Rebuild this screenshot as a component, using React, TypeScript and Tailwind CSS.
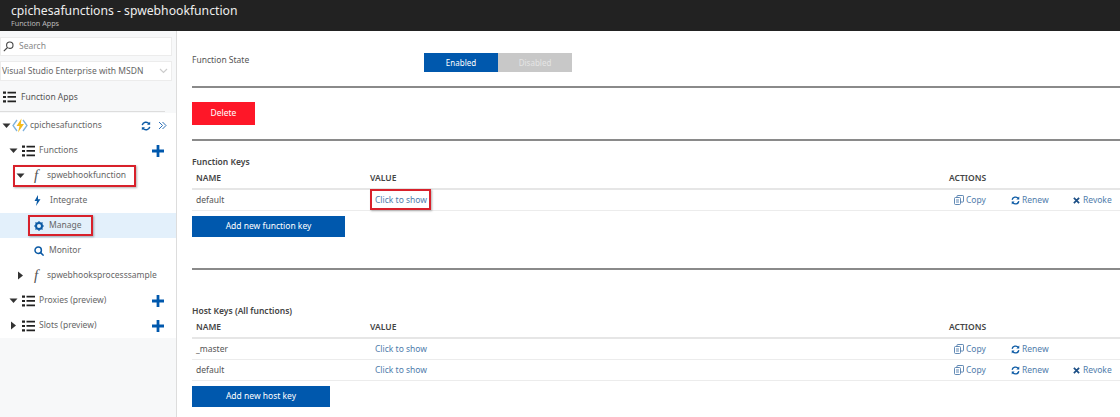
import React from "react";

const Caret = ({ open }: { open: boolean }) => (
  <svg width="9" height="9" viewBox="0 0 9 9" className="shrink-0">
    {open ? <path d="M0.5 2.5H8.5L4.5 7Z" fill="#333" /> : <path d="M2 0.5V8.5L7 4.5Z" fill="#333" />}
  </svg>
);
const ListIcon = () => (
  <svg width="13" height="12" viewBox="0 0 13 12" className="shrink-0">
    <path d="M0 0.5h3v2.2H0zM4.5 0.7H13v1.7H4.5zM0 4.9h3v2.2H0zM4.5 5.1H13v1.7H4.5zM0 9.3h3v2.2H0zM4.5 9.5H13v1.7H4.5z" fill="#222" />
  </svg>
);
const Plus = () => (
  <svg width="12" height="12" viewBox="0 0 13 13" className="shrink-0">
    <path d="M5 0h3v5h5v3H8v5H5V8H0V5h5z" fill="#0058ad" />
  </svg>
);
const Fn = () => <span className="w-[12px] text-center text-[15px] italic text-[#555] leading-none font-['Liberation_Serif',serif]">f</span>;
const Refresh = ({ size = 10, w = 1.8 }: { size?: number; w?: number }) => (
  <svg width={size} height={size} viewBox="0 0 12 12" fill="none" className="shrink-0">
    <path d="M1.5 5A4.6 4.6 0 0 1 9.6 3.2" stroke="#0b5aa5" strokeWidth={w} />
    <path d="M10.5 7A4.6 4.6 0 0 1 2.4 8.8" stroke="#0b5aa5" strokeWidth={w} />
    <path d="M11 0.8V4.6H7.2Z M1 11.2V7.4H4.8Z" fill="#0b5aa5" />
  </svg>
);
const CopyIcon = () => (
  <svg width="10" height="10" viewBox="0 0 10 10" fill="none" stroke="#4f7cab" strokeWidth="0.9" className="shrink-0">
    <rect x="0.5" y="2.5" width="6" height="7" rx="1" />
    <path d="M3 2.4V1.2Q3 .5 3.7 .5H8.8Q9.5 .5 9.5 1.2V6.3Q9.5 7 8.8 7H6.6" />
    <path d="M2 5h3M2 7h3" />
  </svg>
);
const XIcon = () => (
  <svg width="7" height="7" viewBox="0 0 8 8" className="shrink-0">
    <path d="M1 1L7 7M7 1L1 7" stroke="#1c4f86" strokeWidth="2" />
  </svg>
);

const Actions = ({ revoke = true }: { revoke?: boolean }) => (
  <div className="flex items-center text-[#4f7cab] text-[8.5px]">
    <span className="w-[57px] flex items-center gap-[2px]"><CopyIcon /><span>Copy</span></span>
    <span className="w-[62px] flex items-center gap-[2px]"><Refresh size={9} /><span>Renew</span></span>
    {revoke && <span className="flex items-center gap-[3px]"><XIcon /><span>Revoke</span></span>}
  </div>
);

const KeyRow = ({ name, revoke, boxed }: { name: string; revoke?: boolean; boxed?: boolean }) => (
  <div className="h-[21px] flex items-center border-b border-[#ececec] text-[8.5px] text-[#555]">
    <span className="w-[178px] pl-[4px]">{name}</span>
    <span className="relative w-[584px] pl-[5px] text-[#4f7cab]">
      Click to show
      {boxed && <span className="absolute left-0 top-[-5px] w-[61px] h-[21px] border-2 border-[#d8212b] shadow-[1px_1px_2px_rgba(0,0,0,0.3)]" />}
    </span>
    <Actions revoke={revoke} />
  </div>
);

const KeyHead = () => (
  <div className="h-[22px] flex items-center border-b-2 border-[#e6e6e6] text-[8.5px] font-semibold text-[#444]">
    <span className="w-[178px] pl-[4px]">NAME</span>
    <span className="w-[579px]">VALUE</span>
    <span>ACTIONS</span>
  </div>
);

const Rule = ({ className }: { className: string }) => <div className={`h-[2px] bg-[#8a8a8a] ${className}`} />;

const Tree = ({ pl, children, className = "" }: { pl: string; children: React.ReactNode; className?: string }) => (
  <div className={`h-[25px] flex items-center text-[8.5px] text-[#666] ${pl} ${className}`}>{children}</div>
);

export default function App() {
  return (
    <div className="w-[1120px] h-[417px] overflow-hidden bg-white flex flex-col font-['Noto_Sans',sans-serif]">
      <header className="h-[31px] shrink-0 bg-[#222] text-white pl-[11px] pt-[2px]">
        <div className="text-[12.2px] leading-[17px] text-[#eee]">cpichesafunctions - spwebhookfunction</div>
        <div className="text-[7.2px] leading-[9px] text-[#bbb]">Function Apps</div>
      </header>
      <div className="flex flex-1 min-h-0">
        <aside className="w-[177px] shrink-0 bg-[#f7f8f9] border-r border-[#ddd] flex flex-col">
          <div className="mt-[6px] h-[19px] mr-[4px] bg-white border border-[#ececec] flex items-center pl-[2px] gap-[5px] text-[8.5px] text-[#888]">
            <svg width="11" height="11" viewBox="0 0 11 11" fill="none" stroke="#444" strokeWidth="1.1"><circle cx="6.8" cy="4.2" r="3.2" /><path d="M4.5 6.5L0.8 10.2" /></svg>
            Search
          </div>
          <div className="mt-[5px] h-[20px] mr-[4px] bg-white border border-[#ececec] flex items-center justify-between pl-[1px] pr-[3px] text-[8.5px] text-[#666]">
            Visual Studio Enterprise with MSDN
            <svg width="9" height="6" viewBox="0 0 9 6" fill="none" stroke="#ccc" strokeWidth="1.2"><path d="M1 1L4.5 4.5L8 1" /></svg>
          </div>
          <div className="h-[31px] mr-[11px] flex items-center gap-[5px] pl-[3px] pt-[2px] text-[8.5px] text-[#555] border-b border-[#ddd] mb-[1px]">
            <ListIcon /> Function Apps
          </div>
          <div className="bg-white flex flex-col">
            <Tree pl="pl-[2px] pr-[9px]" className="gap-[1px] text-[#555]">
              <Caret open />
              <svg width="16" height="15" viewBox="0 0 16 15" className="shrink-0">
                <path d="M5 2L1 7.5L5 13M11 2L15 7.5L11 13" stroke="#7fb2dc" strokeWidth="1.3" fill="none" />
                <path d="M9.5 0.5L4.5 8H7.5L6 14.5L12 6H8.8Z" fill="#f4bb1c" />
              </svg>
              <span className="flex-1 ml-[1px]">cpichesafunctions</span>
              <Refresh size={10} />
              <svg width="9" height="9" viewBox="0 0 9 9" fill="none" stroke="#2f72b8" strokeWidth="1" className="ml-[6px]"><path d="M1 1l3.5 3.5L1 8M4.5 1L8 4.5 4.5 8" /></svg>
            </Tree>
            <Tree pl="pl-[9px] pr-[12px]" className="gap-[4px]">
              <Caret open /><ListIcon /><span className="flex-1">Functions</span><Plus />
            </Tree>
            <Tree pl="pl-[16px]" className="relative gap-[5px] text-[#555]">
              <Caret open /><Fn /><span>spwebhookfunction</span>
              <span className="absolute left-[13px] top-[2px] w-[123px] h-[22px] border-2 border-[#d8212b] shadow-[1px_1px_2px_rgba(0,0,0,0.3)]" />
            </Tree>
            <Tree pl="pl-[34px]" className="gap-[9px]">
              <svg width="7" height="11" viewBox="0 0 7 11" className="shrink-0"><path d="M4 0L0.5 6H3L2 11L6.5 4.2H4Z" fill="#0b5aa5" /></svg>
              <span>Integrate</span>
            </Tree>
            <Tree pl="pl-[34px]" className="relative gap-[5px] bg-[#e3f0fb]">
              <svg width="10" height="10" viewBox="0 0 10 10" className="shrink-0">
                <circle cx="5" cy="5" r="3" fill="none" stroke="#0b5aa5" strokeWidth="2" />
                <path d="M5 0v10M0 5h10M1.5 1.5l7 7M8.5 1.5l-7 7" stroke="#0b5aa5" strokeWidth="1.1" strokeDasharray="1.6 6.8 1.6 0" />
              </svg>
              <span>Manage</span>
              <span className="absolute left-[28px] top-[2px] w-[65px] h-[21px] border-2 border-[#d8212b] shadow-[1px_1px_2px_rgba(0,0,0,0.3)]" />
            </Tree>
            <Tree pl="pl-[34px]" className="gap-[5px]">
              <svg width="10" height="10" viewBox="0 0 10 10" fill="none" stroke="#0b5aa5" strokeWidth="1.5" className="shrink-0"><circle cx="4.2" cy="4.2" r="3.2" /><path d="M6.6 6.6L9.6 9.6" /></svg>
              <span>Monitor</span>
            </Tree>
            <Tree pl="pl-[16px]" className="gap-[5px]">
              <Caret open={false} /><Fn /><span>spwebhooksprocesssample</span>
            </Tree>
            <Tree pl="pl-[9px] pr-[12px]" className="gap-[4px]">
              <Caret open /><ListIcon /><span className="flex-1">Proxies (preview)</span><Plus />
            </Tree>
            <Tree pl="pl-[9px] pr-[12px]" className="gap-[4px]">
              <Caret open={false} /><ListIcon /><span className="flex-1">Slots (preview)</span><Plus />
            </Tree>
          </div>
        </aside>
        <main className="flex-1 min-w-0 pl-[15px] flex flex-col">
          <div className="h-[55px] flex text-[8.5px] text-[#555] shrink-0">
            <span className="w-[232px] pt-[23px]">Function State</span>
            <div className="flex h-[19px] mt-[22px] text-[8px]">
              <span className="w-[74px] bg-[#0058ad] text-white flex items-center justify-center">Enabled</span>
              <span className="w-[74px] bg-[#c8c8c8] text-[#e4e4e4] flex items-center justify-center">Disabled</span>
            </div>
          </div>
          <Rule className="shrink-0" />
          <button className="mt-[14px] w-[63px] h-[23px] shrink-0 bg-[#fe1728] text-white text-[8.5px]">Delete</button>
          <Rule className="mt-[14px] shrink-0" />
          <div className="mt-[15px] text-[8.5px] leading-[12px] font-semibold text-[#444] shrink-0">Function Keys</div>
          <div className="shrink-0">
            <KeyHead />
            <KeyRow name="default" boxed />
          </div>
          <button className="mt-[5px] w-[153px] h-[21px] shrink-0 bg-[#0058ad] text-white text-[8.5px]">Add new function key</button>
          <Rule className="mt-[31px] shrink-0" />
          <div className="mt-[35px] text-[8.5px] leading-[12px] font-semibold text-[#444] shrink-0">Host Keys (All functions)</div>
          <div className="shrink-0">
            <KeyHead />
            <KeyRow name="_master" revoke={false} />
            <KeyRow name="default" />
          </div>
          <button className="mt-[5px] w-[138px] h-[21px] shrink-0 bg-[#0058ad] text-white text-[8.5px]">Add new host key</button>
        </main>
      </div>
    </div>
  );
}
